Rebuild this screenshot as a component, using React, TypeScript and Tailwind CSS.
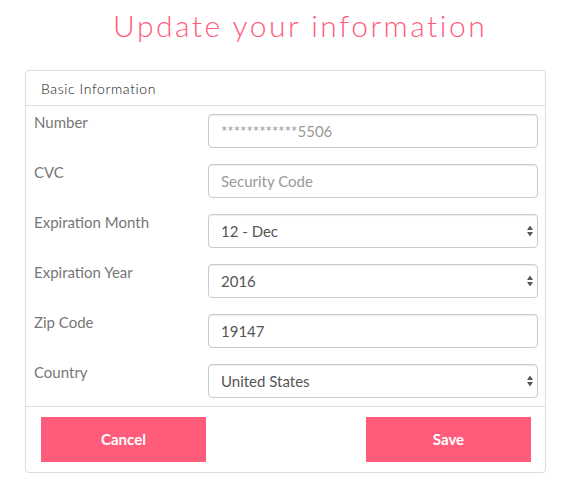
import React from "react";

const Arrows = () => (
  <svg
    width="6"
    height="11"
    viewBox="0 0 6 11"
    className="pointer-events-none absolute right-[5px] top-1/2 -translate-y-1/2"
  >
    <path d="M3 0 L6 4.5 L0 4.5 Z" fill="#555" />
    <path d="M0 6.5 L6 6.5 L3 11 Z" fill="#555" />
  </svg>
);

const inputCls =
  "block w-[330px] h-[34px] rounded-[4px] border border-[#cccccc] bg-white px-[12px] text-[15px] text-[#555555] outline-none placeholder:text-[#999999] shadow-[inset_0_1px_1px_rgba(0,0,0,0.075)]";

function Row({ label, children }: { label: string; children: React.ReactNode }) {
  return (
    <div className="grid grid-cols-[174px_330px]">
      <div className="text-[15px] leading-[17px] text-[#777777]">{label}</div>
      {children}
    </div>
  );
}

function Select({ value, options }: { value: string; options: string[] }) {
  return (
    <div className="relative w-[330px]">
      <select
        defaultValue={value}
        className={inputCls + " appearance-none text-[#333333]"}
      >
        {options.map((o) => (
          <option key={o}>{o}</option>
        ))}
      </select>
      <Arrows />
    </div>
  );
}

export default function App() {
  return (
    <div
      className="min-h-[487px] w-[584px] bg-white"
      style={{ fontFamily: "Lato, 'Open Sans', sans-serif" }}
    >
      <div className="pt-[8px] pl-[113px]">
        <h1 className="text-[30px] font-light leading-[34px] tracking-[2.5px] text-[#ff5d7d]">
          Update your information
        </h1>
      </div>
      <div className="ml-[25px] mt-[28px] w-[521px] rounded-[4px] border border-[#dddddd] bg-white">
        <div className="flex h-[35px] items-center border-b border-[#dddddd] pl-[15px] text-[14px] font-light tracking-[0.6px] text-[#111111]">
          Basic Information
        </div>
        <div className="flex flex-col gap-[16px] px-[8px] py-[8px]">
          <Row label="Number">
            <input className={inputCls} placeholder="************5506" />
          </Row>
          <Row label="CVC">
            <input className={inputCls} placeholder="Security Code" />
          </Row>
          <Row label="Expiration Month">
            <Select value="12 - Dec" options={["01 - Jan", "12 - Dec"]} />
          </Row>
          <Row label="Expiration Year">
            <Select value="2016" options={["2015", "2016"]} />
          </Row>
          <Row label="Zip Code">
            <input className={inputCls + " text-[#333333]"} defaultValue="19147" />
          </Row>
          <Row label="Country">
            <Select value="United States" options={["Canada", "United States"]} />
          </Row>
        </div>
        <div className="flex justify-between border-t border-[#dddddd] pt-[10px] pb-[10px] pl-[15px] pr-[14px]">
          <button className="h-[45px] w-[165px] bg-[#ff5c7c] text-[15px] font-bold text-white">
            Cancel
          </button>
          <button className="h-[45px] w-[165px] bg-[#ff5c7c] text-[15px] font-bold text-white">
            Save
          </button>
        </div>
      </div>
    </div>
  );
}
